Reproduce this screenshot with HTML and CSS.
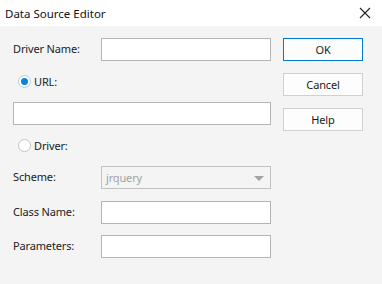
FILE: index.html
```html
<!DOCTYPE html>
<html>
<head>
<meta charset="utf-8">
<link rel="stylesheet" href="styles.css">
</head>
<body>
<div class="window">
  <div class="titlebar">
    <span class="title">Data Source Editor</span>
    <svg class="close" width="12" height="12" viewBox="0 0 12 12"><path d="M1 1L11 11M11 1L1 11" stroke="#222" stroke-width="1.1" fill="none"/></svg>
  </div>
  <div class="content">
    <div class="form">
      <div class="row r-driver">
        <span class="label">Driver Name:</span>
        <div class="field"></div>
      </div>
      <div class="radio-row r-url">
        <span class="radio checked"></span><span>URL:</span>
      </div>
      <div class="field wide r-urlinput"></div>
      <div class="radio-row r-drv">
        <span class="radio"></span><span>Driver:</span>
      </div>
      <div class="row r-scheme">
        <span class="label">Scheme:</span>
        <div class="field select"><span class="sel-text">jrquery</span><span class="arrow"></span></div>
      </div>
      <div class="row r-class">
        <span class="label">Class Name:</span>
        <div class="field"></div>
      </div>
      <div class="row r-params">
        <span class="label">Parameters:</span>
        <div class="field"></div>
      </div>
    </div>
    <div class="buttons">
      <div class="btn default">OK</div>
      <div class="btn">Cancel</div>
      <div class="btn">Help</div>
    </div>
  </div>
</div>
</body>
</html>
```
FILE: styles.css
```css
html, body { margin: 0; padding: 0; }
body {
  font-family: "Noto Sans", "Open Sans", sans-serif;
  font-size: 11px;
  letter-spacing: -0.15px;
  color: #222222;
}
.window {
  width: 382px;
  height: 284px;
  background: #f3f4f3;
  overflow: hidden;
}
.titlebar {
  height: 26px;
  background: #ffffff;
  display: flex;
  align-items: center;
  justify-content: space-between;
  padding-left: 5px;
  padding-right: 11px;
}
.title { font-size: 11.5px; letter-spacing: 0; color: #111; }
.close { display: block; }
.content {
  display: flex;
  padding: 12px 0 0 13px;
}
.form {
  width: 258px;
  display: flex;
  flex-direction: column;
}
.row {
  display: flex;
  align-items: center;
  height: 23px;
}
.label { width: 88px; flex: none; margin-top: -2px; }
.field {
  box-sizing: border-box;
  width: 170px;
  height: 23px;
  background: #ffffff;
  border: 1px solid #b4b4b4;
}
.field.wide { width: 258px; }
.select {
  background: #f3f4f3;
  border-color: #c2c2c2;
  display: flex;
  align-items: center;
  justify-content: space-between;
  padding: 0 6px 0 4px;
}
.sel-text { color: #a3a3a3; }
.arrow {
  width: 0; height: 0;
  border-left: 5px solid transparent;
  border-right: 5px solid transparent;
  border-top: 5px solid #a3a3a3;
  margin-top: 1px;
}
.radio-row {
  display: flex;
  align-items: center;
  height: 20px;
  padding-left: 5px;
}
.radio {
  box-sizing: border-box;
  width: 13px;
  height: 13px;
  border-radius: 50%;
  border: 1px solid #c4c4c4;
  background: #ffffff;
  margin-right: 3px;
  display: flex;
  align-items: center;
  justify-content: center;
}
.radio.checked { border-color: #b7cde0; }
.radio.checked::after {
  content: "";
  width: 7px;
  height: 7px;
  border-radius: 50%;
  background: #0a84d8;
}
.r-url { margin-top: 10px; }
.r-urlinput { margin-top: 11px; }
.r-drv { margin-top: 10px; }
.r-scheme { margin-top: 11px; }
.r-class { margin-top: 12px; }
.r-params { margin-top: 11px; }
.buttons {
  margin-left: 12px;
  width: 80px;
  display: flex;
  flex-direction: column;
  gap: 12px;
}
.btn {
  box-sizing: border-box;
  height: 23px;
  background: #fdfdfd;
  border: 1px solid #d0d0d0;
  display: flex;
  align-items: center;
  justify-content: center;
  color: #1b1b1b;
}
.btn.default { border-color: #0078d7; }
```
